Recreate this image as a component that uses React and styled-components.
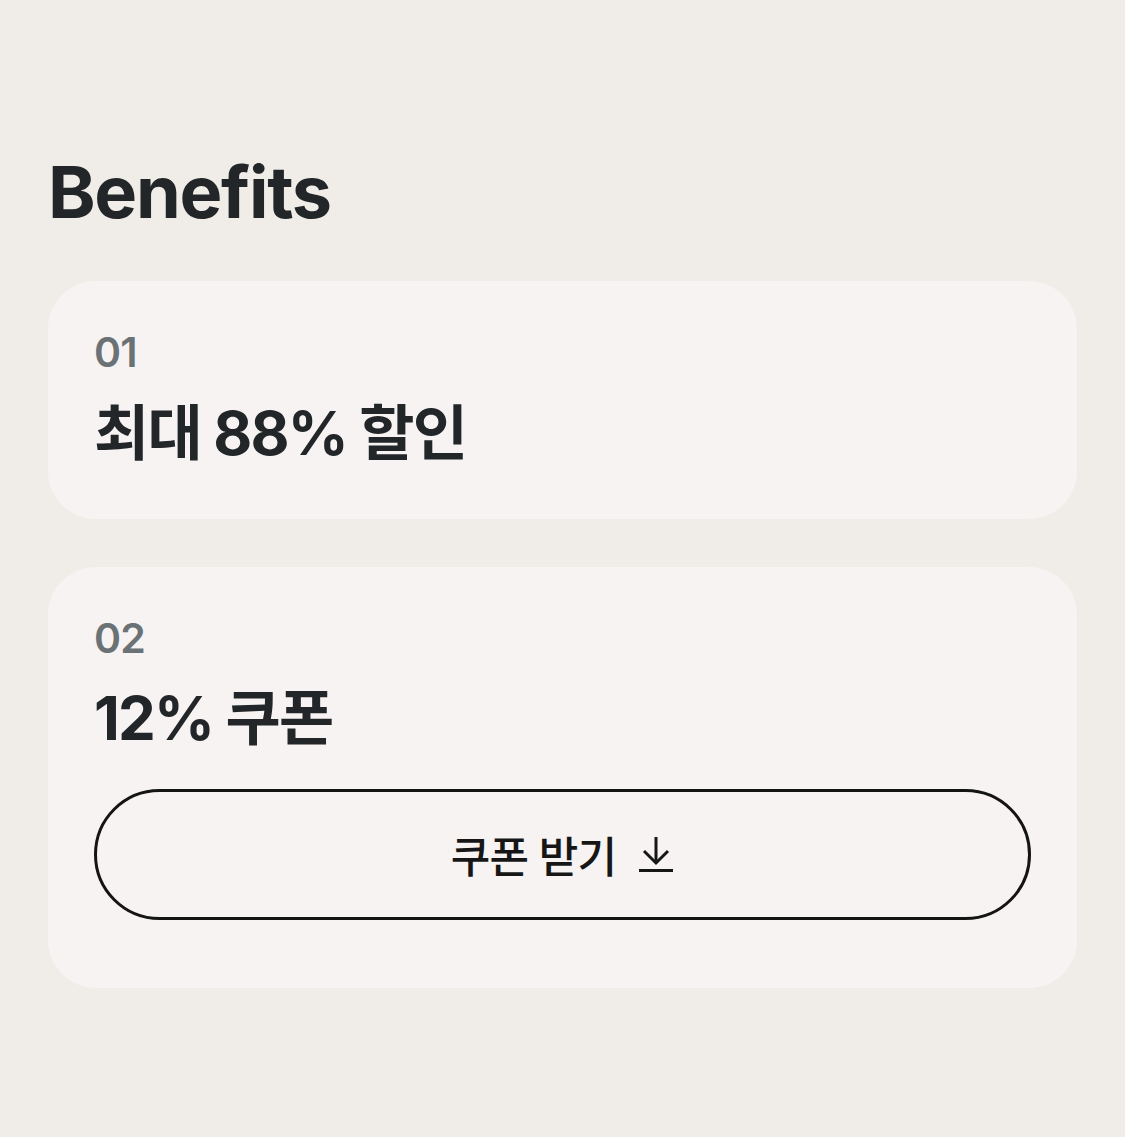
import React from "react";
import styled, { createGlobalStyle } from "styled-components";

const Global = createGlobalStyle`
  html, body { margin: 0; padding: 0; background: #f0ede9; }
  body { font-family: Inter, "Noto Sans CJK KR", sans-serif; -webkit-font-smoothing: antialiased; }
`;

const Page = styled.main`
  min-height: 1137px;
  box-sizing: border-box;
  padding: 149px 48px 48px;
  display: flex;
  flex-direction: column;
`;

const Heading = styled.h1`
  margin: 0 0 46px;
  font-size: 72px;
  line-height: 1.2;
  font-weight: 700;
  color: #222629;
  letter-spacing: -1.3px;
`;

const List = styled.div`
  display: flex;
  flex-direction: column;
  gap: 48px;
`;

const Card = styled.section`
  background: #f7f3f2;
  border-radius: 48px;
  padding: 47px 46px ${(p) => p.$bottom}px;
  display: flex;
  flex-direction: column;
`;

const Index = styled.div`
  font-size: 41px;
  line-height: 1.2;
  font-weight: 600;
  color: #6b7276;
  letter-spacing: -0.8px;
`;

const Title = styled.div`
  margin-top: 16px;
  font-size: 60px;
  line-height: 1.3;
  font-weight: 700;
  color: #222629;
  letter-spacing: -1.8px;
`;

const Button = styled.button`
  margin-top: 32px;
  height: 131px;
  flex-shrink: 0;
  border: 3px solid #141414;
  border-radius: 999px;
  background: transparent;
  display: flex;
  align-items: center;
  justify-content: center;
  gap: 22px;
  font-family: Inter, "Noto Sans CJK KR", sans-serif;
  font-size: 43px;
  font-weight: 500;
  color: #161616;
  letter-spacing: -0.8px;
  cursor: pointer;
`;

const DownIcon = () => (
  <svg width="36" height="38" viewBox="0 0 36 38" fill="none" stroke="#161616" strokeWidth="3">
    <path d="M18 2 V28" />
    <path d="M6 16 L18 28 L30 16" />
    <path d="M1 35.5 H35" />
  </svg>
);

export default function App() {
  return (
    <>
      <Global />
      <Page>
        <Heading>Benefits</Heading>
        <List>
          <Card $bottom={47}>
            <Index>01</Index>
            <Title>최대 88% 할인</Title>
          </Card>
          <Card $bottom={68}>
            <Index>02</Index>
            <Title>12% 쿠폰</Title>
            <Button>
              쿠폰 받기
              <DownIcon />
            </Button>
          </Card>
        </List>
      </Page>
    </>
  );
}
